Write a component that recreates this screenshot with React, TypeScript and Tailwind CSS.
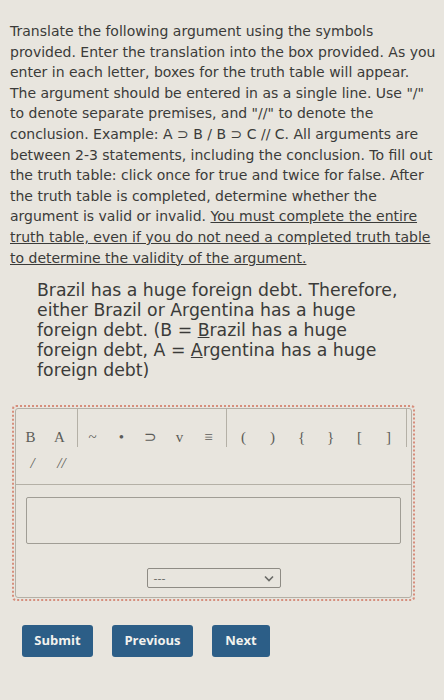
import React from "react";

const row1Letters = ["B", "A"];
const row1Ops = ["~", "•", "⊃", "v", "≡"];
const row1Groups = ["(", ")", "{", "}", "[", "]"];

function Sym({ children }: { children: React.ReactNode }) {
  return (
    <button
      type="button"
      className="flex h-[20px] w-[29px] items-center justify-center text-[15px] leading-none text-[#5c5c58]"
    >
      {children}
    </button>
  );
}

function Divider() {
  return <div className="w-px self-stretch bg-[#b4b0a6]" />;
}

export default function App() {
  return (
    <div className="min-h-[700px] w-[444px] bg-[#e8e5de] pl-[10px] pt-[21px] font-['DejaVu_Sans',Verdana,sans-serif] text-[#3b3b39]">
      <p className="w-[427px] text-[14px] leading-[20.6px]">
        Translate the following argument using the symbols provided. Enter the
        translation into the box provided. As you enter in each letter, boxes
        for the truth table will appear. The argument should be entered in as a
        single line. Use "/" to denote separate premises, and "//" to denote the
        conclusion. Example: A ⊃ B / B ⊃ C // C. All arguments are between 2-3
        statements, including the conclusion. To fill out the truth table: click
        once for true and twice for false. After the truth table is completed,
        determine whether the argument is valid or invalid.{" "}
        <span className="underline">
          You must complete the entire truth table, even if you do not need a
          completed truth table to determine the validity of the argument.
        </span>
      </p>

      <p className="ml-[27px] mt-[12px] w-[372px] text-[17.3px] leading-[20px]">
        Brazil has a huge foreign debt. Therefore, either Brazil or Argentina
        has a huge foreign debt. (B = <span className="underline">B</span>razil
        has a huge foreign debt, A = <span className="underline">A</span>rgentina
        has a huge foreign debt)
      </p>

      <div className="ml-[2px] mt-[25px] w-[403px] rounded-[4px] border-2 border-dotted border-[#d68e7c] p-[1px]">
        <div className="rounded-[3px] border border-[#b4b0a6]">
          <div className="border-b border-[#b4b0a6] pb-[11px] font-['Liberation_Serif',serif]">
            <div className="flex h-[38px] items-end">
              <div className="flex mr-[3px]">
                {row1Letters.map((s) => (
                  <Sym key={s}>{s}</Sym>
                ))}
              </div>
              <Divider />
              <div className="flex pr-[3px]">
                {row1Ops.map((s) => (
                  <Sym key={s}>{s}</Sym>
                ))}
              </div>
              <Divider />
              <div className="flex pl-[2px] pr-[3px]">
                {row1Groups.map((s) => (
                  <Sym key={s}>{s}</Sym>
                ))}
              </div>
              <Divider />
            </div>
            <div className="mt-[6px] flex pl-[2px] italic">
              <Sym>/</Sym>
              <Sym>//</Sym>
            </div>
          </div>

          <div className="px-[10px] pt-[12px]">
            <div className="h-[47px] w-full rounded-[2px] border border-[#a09d95]" />
          </div>

          <div className="flex justify-center pb-[9px] pt-[24px]">
            <div className="flex h-[20px] w-[134px] items-center justify-between rounded-[2px] border border-[#8e8b84] px-[6px] text-[11px] text-[#6a6a66]">
              <span className="leading-none">---</span>
              <svg width="10" height="7" viewBox="0 0 10 7" fill="none">
                <path d="M1 1.5l4 4 4-4" stroke="#6a6a66" strokeWidth="1.6" />
              </svg>
            </div>
          </div>
        </div>
      </div>

      <div className="mt-[24px] flex items-start gap-[19px] pl-[12px] font-['Open_Sans',sans-serif]">
        <button
          type="button"
          className="h-[32px] w-[71px] rounded-[3px] bg-[#2c5e87] text-[13px] font-bold text-[#f2f2ee]"
        >
          Submit
        </button>
        <button
          type="button"
          className="h-[32px] w-[81px] rounded-[3px] bg-[#2c5e87] text-[13px] font-bold text-[#f2f2ee]"
        >
          Previous
        </button>
        <button
          type="button"
          className="h-[32px] w-[58px] rounded-[3px] bg-[#2c5e87] text-[13px] font-bold text-[#f2f2ee]"
        >
          Next
        </button>
      </div>
    </div>
  );
}
